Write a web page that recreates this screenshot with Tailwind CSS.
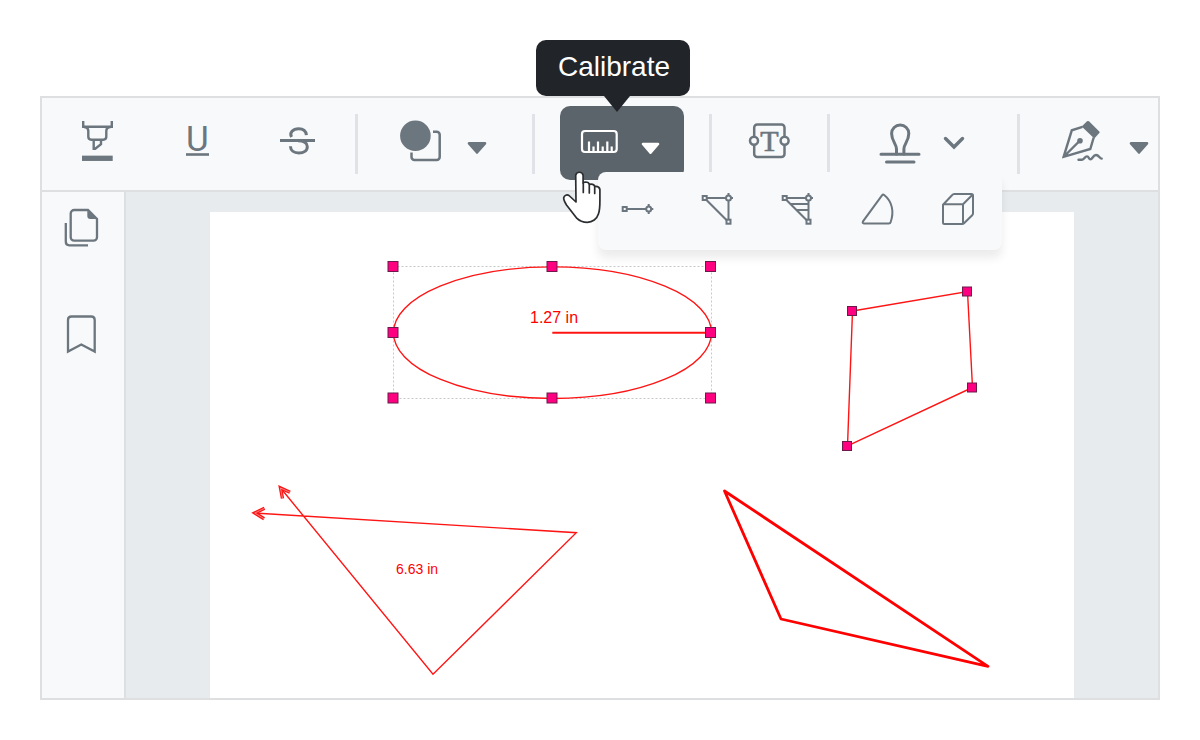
<!DOCTYPE html>
<html lang="en">
<head>
  <meta charset="UTF-8" />
  <meta name="viewport" content="width=device-width, initial-scale=1.0"/>
  <title>Calibrate - Document Viewer</title>
  <script src="https://cdn.jsdelivr.net/npm/@tailwindcss/browser@4"></script>
</head>
<body class="bg-white font-['Liberation_Sans',Arial,sans-serif]">

  <div class="min-h-screen flex flex-col px-10 pt-24 pb-10">
    <div class="flex-1 flex flex-col border-2 border-[#dedfe1]">

      <!-- Toolbar -->
      <header class="relative z-10 h-[94px] shrink-0 bg-[#f8f9fb] border-b-2 border-[#dedfe1] text-[#6c767e] grid grid-cols-[313fr_3px_174fr_3px_174fr_3px_115fr_3px_187fr_3px_138fr] items-center">

        <!-- Text markup -->
        <div class="flex pl-1.5">
          <button type="button" aria-label="Highlight" class="w-[100px] flex justify-center">
            <svg class="size-12" viewBox="0 0 48 48" fill="none" stroke="currentColor" stroke-width="2.4">
              <path d="M9.200 1v5.700h28.600V1"/>
              <path d="M10 7c3 .2 4.300 1.600 4.300 4v5.500q0 3.200 3 3.200h12q3 0 3-3.200V11c0-2.400 1.300-3.800 4.300-4"/>
              <path d="M19.700 20v8.700h1.500l5.800-4.500V20"/>
              <path d="M8 38.300h30.700" stroke-width="5.300"/>
            </svg>
          </button>
          <button type="button" aria-label="Underline" class="w-[100px] flex justify-center">
            <svg class="size-12" viewBox="0 0 48 48">
              <text x="23.400" y="31" text-anchor="middle" font-size="35" fill="currentColor" class="font-['Roboto',sans-serif]">U</text>
              <path d="M12 34.500h23" stroke="currentColor" stroke-width="2.600"/>
            </svg>
          </button>
          <button type="button" aria-label="Strikethrough" class="w-[100px] flex justify-center">
            <svg class="size-12" viewBox="0 0 48 48" fill="none" stroke="currentColor" stroke-width="3">
              <path d="M6 20.600h35"/>
              <path d="M17.600 17c-2.600-4.500 1.400-8.200 7.100-8.200 4.500 0 7.300 2.400 7.700 6.400"/>
              <path d="M24 20.800c6 0 9.300 2.200 9.300 6 0 3.900-3.500 6.200-8.500 6.200s-8.200-2.600-8.400-6.800"/>
            </svg>
          </button>
        </div>
        <div class="h-[60px] bg-[#e0e2e7]"></div>

        <!-- Shapes -->
        <div class="flex items-center gap-4 pl-[42px]">
          <button type="button" aria-label="Shapes">
            <svg class="size-12" viewBox="0 0 48 48" fill="none" stroke="currentColor" stroke-width="2.500">
              <circle cx="15.400" cy="15.700" r="15.300" fill="currentColor" stroke="none"/>
              <path d="M33 11.800h3.700a3 3 0 0 1 3 3V37a3 3 0 0 1-3 3H14.500a3 3 0 0 1-3-3v-4.500"/>
            </svg>
          </button>
          <button type="button" aria-label="More shapes">
            <svg class="size-[26px]" viewBox="0 0 26 26" fill="currentColor" stroke="currentColor" stroke-width="2.600" stroke-linejoin="round">
              <path d="M5 12.300h16L13 21.500z"/>
            </svg>
          </button>
        </div>
        <div class="h-[60px] bg-[#e0e2e7]"></div>

        <!-- Calibrate -->
        <div class="relative justify-self-center w-[124px] h-[74px] mb-0.5 flex items-center gap-3.5 pl-4 rounded-[10px] bg-[#5c646b] text-white">
          <button type="button" aria-labelledby="calibrate-tip">
            <svg class="size-12" viewBox="0 0 48 48" fill="none" stroke="currentColor" stroke-width="2.200">
              <rect x="6" y="12" width="34.700" height="21" rx="3"/>
              <path d="M13 22.500V33M22 22.500V33M31.300 22.500V33M17.500 27.500V33M26.700 27.500V33M35.700 27.500V33"/>
            </svg>
          </button>
          <button type="button" aria-label="Calibrate options" aria-expanded="true">
            <svg class="size-[26px]" viewBox="0 0 26 26" fill="currentColor" stroke="currentColor" stroke-width="2.600" stroke-linejoin="round">
              <path d="M5 14h15l-7.500 8.700z"/>
            </svg>
          </button>

          <div id="calibrate-tip" role="tooltip" class="absolute -left-6 -top-[66px] w-[154px] h-14 pl-0.5 rounded-[10px] bg-[#212529] text-white text-[28px] leading-[54px] text-center">
            Calibrate
            <svg class="absolute left-[68px] top-[55px] w-[26px] h-[17px]" viewBox="0 0 26 17" fill="#212529"><path d="M0 0h26v1L13 17 0 1z"/></svg>
          </div>

          <div class="absolute left-[38px] top-[66px] w-[404px] h-[78px] flex items-center rounded-lg bg-[#f8f9fb] text-[#6c767e] shadow-[0_8px_10px_rgba(0,0,0,0.08)]">
            <button type="button" aria-label="Distance" class="w-20 flex justify-center">
              <svg class="size-10" viewBox="0 0 40 40" fill="none" stroke="currentColor" stroke-width="2">
                <rect x="4.700" y="16" width="4" height="4"/>
                <path d="M8.700 18h19.600M33 18h2.300M30.700 13v2.500M30.700 20.500V23"/>
                <circle cx="30.700" cy="18" r="2.500"/>
              </svg>
            </button>
            <button type="button" aria-label="Perimeter" class="w-20 flex justify-center">
              <svg class="size-10" viewBox="0 0 40 40" fill="none" stroke="currentColor" stroke-width="2">
                <rect x="4.700" y="5" width="4" height="4"/>
                <rect x="28.500" y="28.700" width="4" height="4"/>
                <circle cx="30.500" cy="7" r="2.500"/>
                <path d="M8.700 7H28M33 7h2M30.500 2v2.500M30.500 9.500v19.200M8.200 8.700l20.500 20.500"/>
              </svg>
            </button>
            <button type="button" aria-label="Area" class="w-20 flex justify-center">
              <svg class="size-10" viewBox="0 0 40 40" fill="none" stroke="currentColor" stroke-width="2">
                <rect x="4.700" y="5" width="4" height="4"/>
                <rect x="28.500" y="28.700" width="4" height="4"/>
                <circle cx="30.500" cy="7" r="2.500"/>
                <path d="M8.700 7H28M33 7h2M30.500 2v2.500M30.500 9.500v19.200M8.200 8.700l20.500 20.500M12.500 13h18M18.500 19h12"/>
              </svg>
            </button>
            <button type="button" aria-label="Radius" class="w-20 flex justify-center">
              <svg class="size-10" viewBox="0 0 40 40" fill="none" stroke="currentColor" stroke-width="2">
                <path d="M6 32.500h24.800q1.500 0 1.900-1.500c3.500-10 1.600-20.600-6.500-27q-1.200-.9-2.200.4L5 30.400q-1 1.900 1 2.100z"/>
              </svg>
            </button>
            <button type="button" aria-label="Volume" class="w-20 flex justify-center">
              <svg class="size-10" viewBox="0 0 40 40" fill="none" stroke="currentColor" stroke-width="2" stroke-linejoin="round">
                <path d="M5 13.200h20v19.800M25 13.200l9.500-9.500M5 13.700L14 4.200q1-1.200 2.300-1.200H33.500Q35 3 35 4.500V22.500q0 1-.8 1.800L26 32.200q-.8.800-1.800.8H6.500Q5 33 5 31.500z"/>
              </svg>
            </button>
          </div>

          <!-- Hand cursor -->
          <svg class="absolute left-0.5 top-16 w-10 h-[54px]" viewBox="0 0 40 54" fill="#fff" stroke="#2b2e31" stroke-width="1.700" stroke-linejoin="round" stroke-linecap="round">
            <path d="M14 32L13.700 5.200a3.800 3.800 0 0 1 7.400 0V13q1-1 2.500-1 3.200.2 3.800 2.300 4.500-.8 5.500 2.200 4.300-.4 5 3V28c0 5 .3 11-1.500 16-1.500 5-6 8.300-11 8.300-4.500 0-8-1.500-11-4.500L4.500 35c-1.800-3-3-5-2.800-7.300.6-2.500 3.200-3.500 5.300-2.200z"/>
            <path fill="none" d="M21.300 13v9.500M27.300 14.500v8.500M32.700 16.500v7"/>
          </svg>
        </div>
        <div class="h-[60px] bg-[#e0e2e7]"></div>

        <!-- Free text -->
        <div class="flex pl-[34px]">
          <button type="button" aria-label="Free text">
            <svg class="size-12" viewBox="0 0 48 48" fill="none" stroke="currentColor" stroke-width="2.500">
              <rect x="8.200" y="4.500" width="30.300" height="32.600" rx="3"/>
              <circle cx="8" cy="20.700" r="4" fill="#f8f9fb"/>
              <circle cx="38.600" cy="20.700" r="4" fill="#f8f9fb"/>
              <text x="23.300" y="30.600" text-anchor="middle" font-size="30" fill="currentColor" stroke-width=".7" class="font-['Liberation_Serif',serif]">T</text>
            </svg>
          </button>
        </div>
        <div class="h-[60px] bg-[#e0e2e7]"></div>

        <!-- Stamp -->
        <div class="flex items-center gap-4 pl-[46px]">
          <button type="button" aria-label="Stamp">
            <svg class="size-12" viewBox="0 0 48 48" fill="none" stroke="currentColor" stroke-width="3" stroke-linecap="round">
              <path d="M20.500 34v-5c0-5-4.900-8-4.900-15.500a8.600 8.500 0 0 1 17.200 0c0 7.500-4.900 10.500-4.900 15.500v5"/>
              <path d="M5 34.300h38M10.500 42h27.500"/>
            </svg>
          </button>
          <button type="button" aria-label="More stamps">
            <svg class="size-[26px]" viewBox="0 0 26 26" fill="none" stroke="currentColor" stroke-width="3.400" stroke-linecap="round">
              <path d="M5.500 7.500l8.500 8.500L22.500 7.500"/>
            </svg>
          </button>
        </div>
        <div class="h-[60px] bg-[#e0e2e7]"></div>

        <!-- Signature -->
        <div class="flex items-center gap-4 pl-[42px]">
          <button type="button" aria-label="Signature">
            <svg class="size-12" viewBox="0 0 48 48" fill="none" stroke="currentColor" stroke-width="2.400">
              <path fill="currentColor" stroke="none" d="M25 1.300q1-.8 2 0L37.300 11.500q.9.800 0 1.600L32.300 18.500 19.700 6.500z"/>
              <path d="M20.500 6.800L9.800 10.300 1.600 36.900l26.700-7.900 3.400-11.500M2 36.500l15-15"/>
              <circle cx="18" cy="20.700" r="2.800" fill="currentColor" stroke="none"/>
              <path stroke-linecap="round" d="M16.500 39.700h3.500c2.500 0 2.500-3.300 5-3.300 2.200 0 1.500 2.900 3.500 2.900s2.500-4.300 5.500-4.300 3.500 3.500 5.700 3.600"/>
            </svg>
          </button>
          <button type="button" aria-label="More signatures">
            <svg class="size-[26px]" viewBox="0 0 26 26" fill="currentColor" stroke="currentColor" stroke-width="2.600" stroke-linejoin="round">
              <path d="M5 12.300h16L13 21.500z"/>
            </svg>
          </button>
        </div>
      </header>

      <div class="flex-1 flex">
        <!-- Sidebar -->
        <aside class="w-[84px] shrink-0 flex flex-col items-start gap-[67px] pt-4 pl-5 bg-[#f8f9fb] border-r-2 border-[#dedfe1] text-[#6c767e]">
          <button type="button" aria-label="Pages">
            <svg class="size-10" viewBox="0 0 40 40" fill="none" stroke="currentColor" stroke-width="2.300">
              <path d="M12.200 2H26l9 9v18.200a3.500 3.500 0 0 1-3.500 3.500H12.200a3.500 3.500 0 0 1-3.500-3.500V5.500A3.500 3.500 0 0 1 12.200 2z"/>
              <path d="M25.300 2l9.700 9h-6.700a3 3 0 0 1-3-3z" fill="currentColor" stroke="none"/>
              <path d="M3.800 15v18.800q0 3.500 3.500 3.500H26"/>
            </svg>
          </button>
          <button type="button" aria-label="Bookmarks">
            <svg class="size-10" viewBox="0 0 40 40" fill="none" stroke="currentColor" stroke-width="2.300">
              <path d="M6 36.500V5q0-3.500 3.500-3.500h19.700q3.500 0 3.500 3.500v31.500l-13.400-7z"/>
            </svg>
          </button>
        </aside>

        <!-- Document -->
        <main class="flex-1 flex bg-[#e7ebee] px-[84px] pt-5">
          <div class="flex-1 bg-white">
            <svg class="block w-full" viewBox="0 0 864 486" fill="none" stroke="#ff1414" stroke-width="1.400">
              <!-- Selected ellipse -->
              <rect x="183.500" y="54.500" width="318" height="132" stroke="#c8c8c8" stroke-width="1" stroke-dasharray="2 2"/>
              <ellipse cx="342.500" cy="120.700" rx="159" ry="65.800"/>
              <path d="M342.300 120.800H501" stroke-width="2"/>
              <text x="320" y="111" font-size="16" fill="#ff0000" stroke="none">1.27 in</text>
              <g fill="#ff0080" stroke="#6b1a4a" stroke-width="1">
                <rect x="178" y="49.500" width="10" height="10"/>
                <rect x="337" y="49.500" width="10" height="10"/>
                <rect x="495.500" y="49.500" width="10" height="10"/>
                <rect x="178" y="115.500" width="10" height="10"/>
                <rect x="495.500" y="115.500" width="10" height="10"/>
                <rect x="178" y="181" width="10" height="10"/>
                <rect x="337" y="181" width="10" height="10"/>
                <rect x="495.500" y="181" width="10" height="10"/>
              </g>

              <!-- Selected polygon -->
              <path d="M642.500 99L757.500 79.500 762.500 175.500 637.500 234z"/>
              <g fill="#ff0080" stroke="#6b1a4a" stroke-width="1">
                <rect x="637.500" y="94.500" width="9" height="9"/>
                <rect x="752.500" y="75" width="9" height="9"/>
                <rect x="757.500" y="171" width="9" height="9"/>
                <rect x="632.500" y="229.500" width="9" height="9"/>
              </g>

              <!-- Open polyline with arrow ends -->
              <path d="M43.700 301L366.300 320.700 223 462.300 70 275.300" stroke-width="1.400"/>
              <path d="M54.500 296.300L44.800 301l9.300 5.800M80 280.300l-9.500-4.300 2 10.500" stroke-width="3.400"/>
              <path d="M54.500 296.300L44.800 301l9.300 5.800M80 280.300l-9.500-4.300 2 10.500" stroke="#ffb0b0" stroke-width=".7"/>
              <text x="186" y="362" font-size="14" fill="#ff0000" stroke="none">6.63 in</text>

              <!-- Triangle -->
              <path d="M514.500 279L778 454.300 571 407z" stroke="#ff0000" stroke-width="2.800" stroke-linejoin="round"/>
            </svg>
          </div>
        </main>
      </div>
    </div>
  </div>

</body>
</html>
